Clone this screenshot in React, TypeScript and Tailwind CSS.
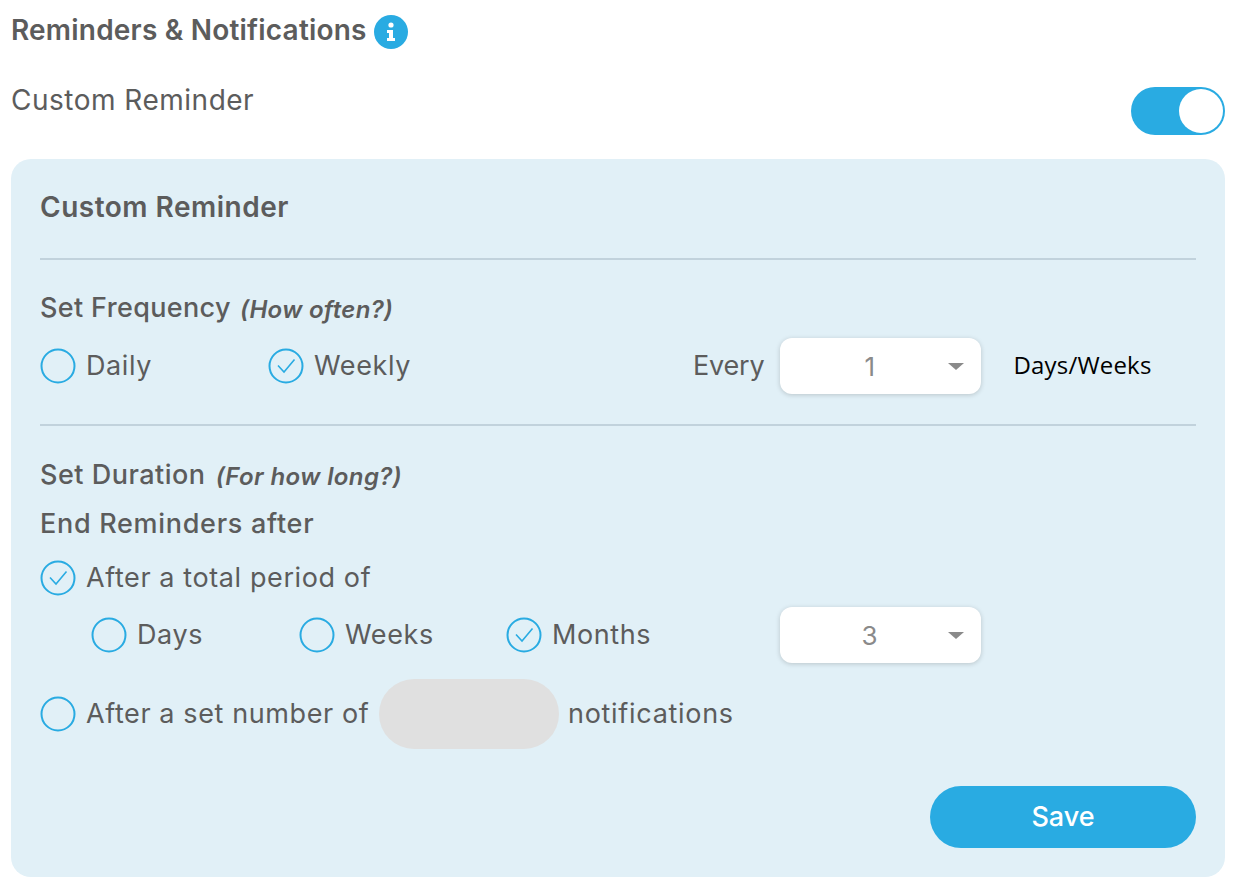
import React from "react";

function Radio({ checked }: { checked?: boolean }) {
  return (
    <svg width="36" height="36" viewBox="0 0 36 36" className="shrink-0">
      <circle cx="18" cy="18" r="16.5" fill="none" stroke="#29abe2" strokeWidth="2" />
      {checked && <path d="M10 17.5 L16 24 L26.5 11.5" fill="none" stroke="#29abe2" strokeWidth="1.6" />}
    </svg>
  );
}

function Opt({ label, checked, w }: { label: string; checked?: boolean; w: string }) {
  return (
    <div className={`flex items-center gap-[10px] ${w}`}>
      <Radio checked={checked} />
      <span className="text-[27px] tracking-[0.6px] text-[#5c5c5c]">{label}</span>
    </div>
  );
}

function Select({ value }: { value: string }) {
  return (
    <div className="relative flex h-[56px] w-[201px] items-center justify-center rounded-[12px] bg-white pr-[22px] text-[26px] text-[#8a8a8a] shadow-[0_1px_5px_rgba(0,0,0,0.18)]">
      {value}
      <span className="absolute right-[17px] top-[25px] h-0 w-0 border-x-[8px] border-t-[7px] border-x-transparent border-t-[#8a8a8a]" />
    </div>
  );
}

export default function App() {
  return (
    <div className="h-[894px] w-[1236px] bg-white px-[11px] font-['Inter','Liberation_Sans',sans-serif] text-[#5c5c5c]">
      <div className="flex h-[60px] items-center gap-[7px]">
        <h1 className="text-[28px] font-semibold tracking-[0.2px]">Reminders &amp; Notifications</h1>
        <svg width="34" height="34" viewBox="0 0 34 34" className="mt-[4px]">
          <circle cx="17" cy="17" r="17" fill="#29abe2" />
          <circle cx="17" cy="10" r="2.6" fill="#fff" />
          <path d="M13 15h6v8h2v3h-8v-3h2v-5h-2z" fill="#fff" />
        </svg>
      </div>
      <div className="flex h-[99px] justify-between">
        <span className="mt-[18px] text-[28px] leading-[44px] tracking-[0.5px]">Custom Reminder</span>
        <div className="mt-[27px] flex h-[48px] w-[94px] items-center justify-end rounded-full bg-[#29abe2] pr-[2px]">
          <span className="h-[44px] w-[44px] rounded-full bg-white" />
        </div>
      </div>
      <div className="h-[718px] rounded-[20px] bg-[#e1f0f7] px-[29px]">
        <div className="flex h-[101px] items-center border-b-2 border-[#c1d2dc] pb-[3px]">
          <h2 className="text-[28px] font-semibold tracking-[0.5px]">Custom Reminder</h2>
        </div>
        <div className="h-[166px] border-b-2 border-[#c1d2dc]">
          <div className="flex h-[78px] items-end pb-[10px]">
            <span className="text-[27px] font-medium tracking-[0.35px]">Set Frequency</span>
            <span className="ml-[9px] text-[24px] font-semibold italic tracking-[0.3px]">(How often?)</span>
          </div>
          <div className="flex h-[56px] items-center">
            <Opt label="Daily" w="w-[228px]" />
            <Opt label="Weekly" checked w="w-[425px]" />
            <span className="mr-[16px] text-[27px] tracking-[-0.2px]">Every</span>
            <Select value="1" />
            <span className="mb-[2px] ml-[32px] font-['Open_Sans',sans-serif] text-[24px] tracking-[0.2px] text-black">Days/Weeks</span>
          </div>
        </div>
        <div className="flex h-[78px] items-end pb-[9px]">
          <span className="text-[27px] font-medium tracking-[0.5px]">Set Duration</span>
          <span className="ml-[10px] text-[24px] font-semibold italic tracking-[0.4px]">(For how long?)</span>
        </div>
        <div className="flex h-[42px] items-center pb-[2px] text-[27px] font-medium tracking-[0.7px]">End Reminders after</div>
        <div className="mt-[8px] flex h-[48px] items-center">
          <Opt label="After a total period of" checked w="w-full" />
        </div>
        <div className="mt-[5px] flex h-[56px] items-center pl-[51px]">
          <Opt label="Days" w="w-[208px]" />
          <Opt label="Weeks" w="w-[207px]" />
          <Opt label="Months" checked w="w-[274px]" />
          <Select value="3" />
        </div>
        <div className="mt-[16px] flex h-[70px] items-center">
          <Opt label="After a set number of" w="w-[339px]" />
          <div className="h-[70px] w-[180px] rounded-full bg-[#e0e0e0]" />
          <span className="ml-[9px] text-[27px] tracking-[0.7px]">notifications</span>
        </div>
        <div className="mt-[37px] flex justify-end">
          <button className="h-[62px] w-[266px] rounded-full bg-[#29abe2] text-[27px] font-medium text-white">Save</button>
        </div>
      </div>
    </div>
  );
}
